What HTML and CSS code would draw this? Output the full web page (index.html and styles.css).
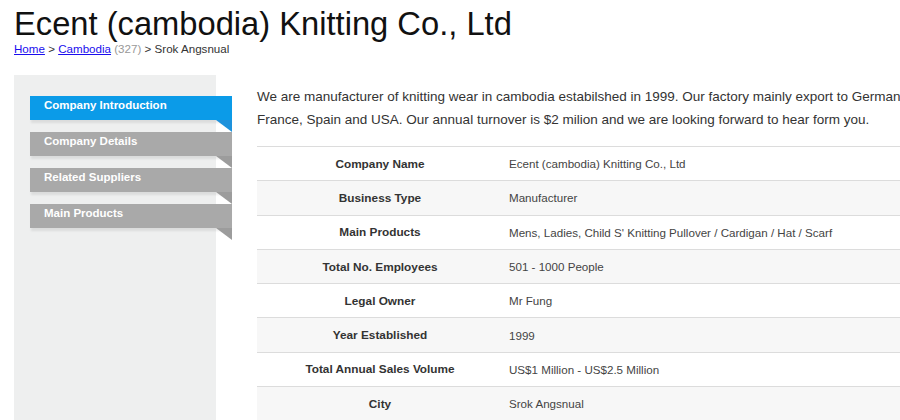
FILE: index.html
```
<!DOCTYPE html>
<html lang="en">
<head>
<meta charset="utf-8">
<title>Ecent (cambodia) Knitting Co., Ltd</title>
<link rel="stylesheet" href="styles.css">
</head>
<body>
<header class="header">
  <h1 class="title">Ecent (cambodia) Knitting Co., Ltd</h1>
  <div class="crumbs"><a href="#">Home</a> &gt; <a href="#">Cambodia</a> <span class="count">(327)</span> &gt; Srok Angsnual</div>
</header>
<div class="main">
  <aside class="sidebar">
    <ul class="menu">
      <li class="item active">Company Introduction</li>
      <li class="item">Company Details</li>
      <li class="item">Related Suppliers</li>
      <li class="item">Main Products</li>
    </ul>
  </aside>
  <section class="content">
    <p class="intro">We are manufacturer of knitting wear in cambodia estabilshed in 1999. Our factory mainly export to Germany, France, Spain and USA. Our annual turnover is $2 milion and we are looking forward to hear form you.</p>
    <table class="details">
      <tr><th>Company Name</th><td>Ecent (cambodia) Knitting Co., Ltd</td></tr>
      <tr class="alt"><th>Business Type</th><td>Manufacturer</td></tr>
      <tr><th>Main Products</th><td>Mens, Ladies, Child S' Knitting Pullover / Cardigan / Hat / Scarf</td></tr>
      <tr class="alt"><th>Total No. Employees</th><td>501 - 1000 People</td></tr>
      <tr><th>Legal Owner</th><td>Mr Fung</td></tr>
      <tr class="alt"><th>Year Established</th><td>1999</td></tr>
      <tr><th>Total Annual Sales Volume</th><td>US$1 Million - US$2.5 Million</td></tr>
      <tr class="alt"><th>City</th><td>Srok Angsnual</td></tr>
    </table>
  </section>
</div>
</body>
</html>
```
FILE: styles.css
```
html {
  overflow: hidden;
}
body {
  margin: 0;
  background: #fff;
  font-family: "Liberation Sans", Arial, sans-serif;
  color: #333;
  width: 1000px;
}
.header {
  padding-left: 14px;
}
.title {
  margin: 6px 0 0;
  font-size: 32.7px;
  line-height: 36px;
  font-weight: normal;
  color: #111;
}
.crumbs {
  font-size: 11.6px;
  line-height: 13px;
  color: #333;
}
.crumbs a {
  color: #1a0dee;
  text-decoration: underline;
}
.count {
  color: #999;
}
.main {
  display: flex;
  margin-top: 20px;
  padding-left: 14px;
}
.sidebar {
  width: 202px;
  min-height: 360px;
  background: #eeefef;
  padding-top: 21px;
  flex: none;
}
.menu {
  list-style: none;
  margin: 0;
  padding: 0;
  display: flex;
  flex-direction: column;
  gap: 12px;
}
.item {
  position: relative;
  margin-left: 16px;
  width: 202px;
  height: 24px;
  box-sizing: border-box;
  padding-left: 14px;
  line-height: 18px;
  font-size: 11.5px;
  font-weight: bold;
  color: #fff;
  background: #a9a9a9;
  box-shadow: 0 4px 2px -1px rgba(0, 0, 0, 0.08);
}
.item::after {
  content: "";
  position: absolute;
  right: 0;
  top: 24px;
  border-top: 12px solid #9c9c9c;
  border-left: 16px solid transparent;
}
.item.active {
  background: #0b9be8;
}
.item.active::after {
  border-top-color: #1e92dc;
}
.content {
  margin-left: 41px;
  width: 700px;
  flex: none;
}
.intro {
  margin: 10px 0 15px;
  font-size: 13.5px;
  line-height: 23px;
  color: #333;
}
.details {
  width: 100%;
  border-collapse: collapse;
  border-top: 1px solid #dcdcdc;
  font-size: 11.6px;
}
.details tr {
  height: 34.3px;
  border-bottom: 1px solid #dcdcdc;
}
.details th {
  width: 246px;
  text-align: center;
  font-weight: bold;
  font-size: 11.8px;
  color: #333;
  padding: 0;
}
.details td {
  padding: 0 0 0 6px;
  color: #444;
}
.details tr.alt {
  background: #f7f7f7;
}
```
